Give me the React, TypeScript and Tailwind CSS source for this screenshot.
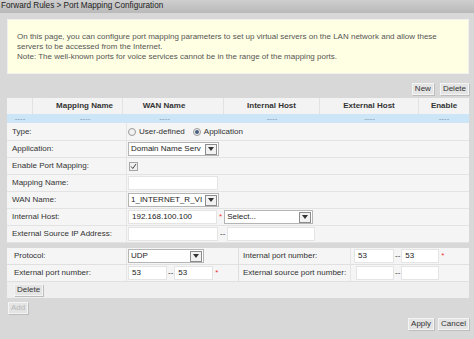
import React from "react";

function Btn({ children, disabled = false }: { children: React.ReactNode; disabled?: boolean }) {
  return (
    <button
      className={`h-[12px] border border-[#f4f4f4] bg-[#e4e4e4] px-[2px] text-[8px] leading-none shadow-[1px_1px_0_#bdbdbd] ${
        disabled ? "text-[#b5b5b5]" : "text-[#333]"
      }`}
    >
      {children}
    </button>
  );
}

function Arrow() {
  return (
    <span className="mr-[1px] flex h-[11px] w-[12px] shrink-0 items-center justify-center border border-[#8c8c8c] bg-[#f2f2f2]">
      <svg width="6" height="4" viewBox="0 0 6 4">
        <path d="M0 0h6L3 4z" fill="#333" />
      </svg>
    </span>
  );
}

function Select({ width, text }: { width: string; text: string }) {
  return (
    <div className={`flex h-[14px] items-center overflow-hidden border border-[#b5b5b5] bg-white ${width}`}>
      <span className="flex-1 overflow-hidden whitespace-nowrap pl-[2px] text-[#222]">{text}</span>
      <Arrow />
    </div>
  );
}

function Input({ width, text = "" }: { width: string; text?: string }) {
  return (
    <div className={`flex h-[14px] items-center border border-[#e4e4e4] bg-white pl-[3px] text-[#222] ${width}`}>
      {text}
    </div>
  );
}

function Star() {
  return <span className="px-[2px] text-[#e33]">*</span>;
}

function Row({ label, children, tall = false }: { label: string; children?: React.ReactNode; tall?: boolean }) {
  return (
    <div className={`flex border-b border-[#e3e3e3] bg-[#f5f5f5] ${tall ? "h-[18px]" : "h-[17px]"}`}>
      <div className="flex w-[120px] items-center border-r border-[#e6e6e6] pl-[5px] text-[#333]">{label}</div>
      <div className="flex flex-1 items-center pl-[1px]">{children}</div>
    </div>
  );
}

function Radio({ checked }: { checked?: boolean }) {
  return (
    <span className="flex h-[8px] w-[8px] items-center justify-center rounded-full border border-[#9a9a9a] bg-[#f2f2f2]">
      {checked && <span className="h-[4px] w-[4px] rounded-full bg-[#4a5f80]" />}
    </span>
  );
}

// column cells, with padding to place the text where the reference has it
const cols = [
  "w-[26px]",
  "w-[90px] pl-[14px]",
  "w-[101px] pr-[18px]",
  "w-[96px]",
  "w-[99px]",
  "flex-1",
];
const heads = ["", "Mapping Name", "WAN Name", "Internal Host", "External Host", "Enable"];

export default function App() {
  return (
    <div className="h-[339px] w-[474px] overflow-hidden bg-[#d8d8d8] font-['Liberation_Sans',Arial,sans-serif] text-[8px] leading-none">
      <div className="flex h-[13px] items-center bg-gradient-to-b from-[#cfcfcf] to-[#b9b9b9] pl-[1px] text-[8.2px] text-[#222]">
        Forward Rules &gt; Port Mapping Configuration
      </div>

      <div className="pl-[7px] pr-[5px]">
        <div className="mt-[6px] h-[55px] border border-[#f0f0f0] bg-[#ffffe3] px-[9px] pt-[12px] leading-[10px] text-[#555]">
          <p>
            On this page, you can configure port mapping parameters to set up virtual servers on the LAN network and allow these
            servers to be accessed from the Internet.
          </p>
          <p>Note: The well-known ports for voice services cannot be in the range of the mapping ports.</p>
        </div>

        <div className="mt-[9px] flex justify-end gap-[6px]">
          <Btn>New</Btn>
          <Btn>Delete</Btn>
        </div>

        <div className="mt-[3px]">
          <div className="flex h-[16px] bg-[#f3f3f3] font-bold text-[#333]">
            {heads.map((h, i) => (
              <div key={i} className={`flex items-center justify-center border-r border-[#e2e2e2] last:border-r-0 ${cols[i]}`}>
                {h}
              </div>
            ))}
          </div>
          <div className="flex h-[9px] bg-[#cde6f7] text-[#7d94aa]">
            {cols.map((c, i) => (
              <div key={i} className={`flex items-center justify-center ${c}`}>
                ----
              </div>
            ))}
          </div>

          <Row label="Type:" tall>
            <div className="flex items-center gap-[3px] text-[#333]">
              <Radio />
              <span>User-defined</span>
              <span className="ml-[2px]" />
              <Radio checked />
              <span>Application</span>
            </div>
          </Row>
          <Row label="Application:">
            <Select width="w-[91px]" text="Domain Name Serv" />
          </Row>
          <Row label="Enable Port Mapping:">
            <span className="ml-[1px] flex h-[9px] w-[9px] items-center justify-center border border-[#a5a5a5] bg-[#f0f0f0]">
              <svg width="7" height="7" viewBox="0 0 7 7">
                <path d="M1 3.5l1.8 2L6 1" stroke="#444" strokeWidth="1" fill="none" />
              </svg>
            </span>
          </Row>
          <Row label="Mapping Name:">
            <Input width="w-[90px]" />
          </Row>
          <Row label="WAN Name:">
            <Select width="w-[91px]" text="1_INTERNET_R_VI" />
          </Row>
          <Row label="Internal Host:">
            <Input width="w-[89px]" text="192.168.100.100" />
            <Star />
            <Select width="w-[89px]" text="Select..." />
          </Row>
          <Row label="External Source IP Address:">
            <Input width="w-[90px]" />
            <span className="px-[2px] text-[#333]">--</span>
            <Input width="w-[88px]" />
          </Row>
        </div>

        <div className="mt-[5px] bg-[#efefef]">
          <div className="flex h-[17px] border-b border-[#e0e0e0]">
            <div className="flex w-[232px] items-center border-r border-[#dedede] bg-[#f5f5f5]">
              <div className="flex h-full w-[120px] items-center border-r border-[#e6e6e6] pl-[7px] text-[#333]">Protocol:</div>
              <div className="flex items-center pl-[1px]">
                <Select width="w-[76px]" text="UDP" />
              </div>
            </div>
            <div className="flex flex-1 items-center bg-[#f5f5f5]">
              <div className="flex h-full w-[112px] items-center border-r border-[#e6e6e6] pl-[4px] text-[#333]">
                Internal port number:
              </div>
              <div className="flex items-center pl-[3px]">
                <Input width="w-[40px]" text="53" />
                <span className="px-[1px] text-[#333]">--</span>
                <Input width="w-[38px]" text="53" />
                <Star />
              </div>
            </div>
          </div>
          <div className="flex h-[17px] border-b border-[#e0e0e0]">
            <div className="flex w-[232px] items-center border-r border-[#dedede] bg-[#f5f5f5]">
              <div className="flex h-full w-[120px] items-center border-r border-[#e6e6e6] pl-[7px] text-[#333]">
                External port number:
              </div>
              <div className="flex items-center pl-[1px]">
                <Input width="w-[39px]" text="53" />
                <span className="px-[1px] text-[#333]">--</span>
                <Input width="w-[39px]" text="53" />
                <Star />
              </div>
            </div>
            <div className="flex flex-1 items-center bg-[#f5f5f5]">
              <div className="flex h-full w-[112px] items-center border-r border-[#e6e6e6] pl-[4px] text-[#333]">
                External source port number:
              </div>
              <div className="flex items-center pl-[5px]">
                <Input width="w-[38px]" />
                <span className="px-[1px] text-[#333]">--</span>
                <Input width="w-[38px]" />
              </div>
            </div>
          </div>
          <div className="flex h-[16px] items-center pl-[7px]">
            <Btn>Delete</Btn>
          </div>
        </div>

        <div className="mt-[4px] pl-[1px]">
          <Btn disabled>Add</Btn>
        </div>

        <div className="mt-[4px] flex justify-end gap-[4px]">
          <Btn>Apply</Btn>
          <Btn>Cancel</Btn>
        </div>
      </div>
    </div>
  );
}
